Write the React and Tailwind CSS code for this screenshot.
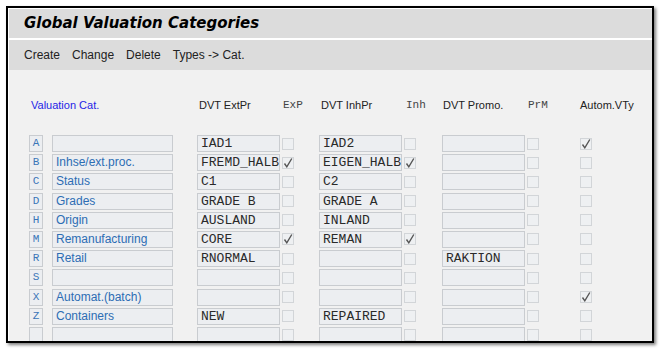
import React from "react"

const rows = [
  { key: "A", desc: "", ext: "IAD1", exp: false, inh: "IAD2", inhc: false, promo: "", prm: false, auto: true },
  { key: "B", desc: "Inhse/ext.proc.", ext: "FREMD_HALB", exp: true, inh: "EIGEN_HALB", inhc: true, promo: "", prm: false, auto: false },
  { key: "C", desc: "Status", ext: "C1", exp: false, inh: "C2", inhc: false, promo: "", prm: false, auto: false },
  { key: "D", desc: "Grades", ext: "GRADE B", exp: false, inh: "GRADE A", inhc: false, promo: "", prm: false, auto: false },
  { key: "H", desc: "Origin", ext: "AUSLAND", exp: false, inh: "INLAND", inhc: false, promo: "", prm: false, auto: false },
  { key: "M", desc: "Remanufacturing", ext: "CORE", exp: true, inh: "REMAN", inhc: true, promo: "", prm: false, auto: false },
  { key: "R", desc: "Retail", ext: "RNORMAL", exp: false, inh: "", inhc: false, promo: "RAKTION", prm: false, auto: false },
  { key: "S", desc: "", ext: "", exp: false, inh: "", inhc: false, promo: "", prm: false, auto: false },
  { key: "X", desc: "Automat.(batch)", ext: "", exp: false, inh: "", inhc: false, promo: "", prm: false, auto: true },
  { key: "Z", desc: "Containers", ext: "NEW", exp: false, inh: "REPAIRED", inhc: false, promo: "", prm: false, auto: false },
  { key: "", desc: "", ext: "", exp: false, inh: "", inhc: false, promo: "", prm: false, auto: false },
]

const sans = "font-['Liberation_Sans',Arial,sans-serif]"
const mono = "font-['Liberation_Mono','Courier_New',monospace]"

const Check = ({ checked, className }) => (
  <div className={`w-[12px] h-[12px] shrink-0 border border-[#d2d5d8] bg-[#eef0f2] ${className}`}>
    {checked && (
      <svg width="10" height="10" viewBox="0 0 10 10" className="block">
        <polyline points="1.5,5.5 3.8,8.8 8.8,0.5" fill="none" stroke="#555" strokeWidth="1.4" />
      </svg>
    )}
  </div>
)

const Field = ({ value, className }) => (
  <div className={`h-[17px] w-[83px] shrink-0 border border-[#c9ccd0] bg-[#eceef1] pl-[3px] ${mono} text-[13px] leading-[15px] text-[#2a2a2a] whitespace-pre overflow-hidden ${className}`}>
    {value}
  </div>
)

export default function App() {
  return (
    <div className="w-[660px] h-[351px] bg-white pt-[6px] pl-[6px]">
      <div className="w-[648px] h-[337px] border-2 border-black shadow-[2px_2px_3px_rgba(0,0,0,0.5)] overflow-hidden bg-white">
        <div className="h-full border-t border-l border-white flex flex-col">
          <div className="h-[29px] bg-[#dcdcdc] flex items-center pl-[15px] shrink-0">
            <span className="font-['DejaVu_Sans',sans-serif] font-bold italic text-[15px] text-black">Global Valuation Categories</span>
          </div>
          <div className="h-[2px] bg-white shrink-0" />
          <div className={`h-[30px] bg-[#dcdcdc] flex items-center gap-[12px] pl-[15px] ${sans} text-[12px] text-[#222] shrink-0`}>
            <span>Create</span>
            <span>Change</span>
            <span>Delete</span>
            <span>Types -&gt; Cat.</span>
          </div>
          <div className="flex-1 bg-[#f1f1f1] pt-[27px]">
            <div className={`flex items-center h-[16px] pl-[22px] ${sans} text-[11px] text-[#222]`}>
              <span className="w-[168px] text-[#2525e6]">Valuation Cat.</span>
              <span className="w-[84px]">DVT ExtPr</span>
              <span className={`w-[38px] ${mono} text-[11px] text-[#444]`}>ExP</span>
              <span className="w-[85px]">DVT InhPr</span>
              <span className={`w-[37px] ${mono} text-[11px] text-[#444]`}>Inh</span>
              <span className="w-[85px]">DVT Promo.</span>
              <span className={`w-[52px] ${mono} text-[11px] text-[#444]`}>PrM</span>
              <span>Autom.VTy</span>
            </div>
            <div className="mt-[22px] flex flex-col gap-[2.2px] pl-[20px]">
              {rows.map((r, i) => (
                <div key={i} className="flex items-center h-[17px]">
                  <div className={`w-[14px] h-[17px] shrink-0 border border-[#c9ccd0] bg-[#eceef1] text-center ${mono} text-[11px] leading-[15px] text-[#3a75b8]`}>
                    {r.key}
                  </div>
                  <div className={`ml-[9px] w-[121px] h-[17px] shrink-0 border border-[#c9ccd0] bg-[#eceef1] pl-[3px] ${sans} text-[12px] leading-[15px] text-[#2d6db4]`}>
                    {r.desc}
                  </div>
                  <Field value={r.ext} className="ml-[24px]" />
                  <Check checked={r.exp} className="ml-[2px]" />
                  <Field value={r.inh} className="ml-[25px]" />
                  <Check checked={r.inhc} className="ml-[2px]" />
                  <Field value={r.promo} className="ml-[26px]" />
                  <Check checked={r.prm} className="ml-[2px]" />
                  <Check checked={r.auto} className="ml-[41px]" />
                </div>
              ))}
            </div>
          </div>
        </div>
      </div>
    </div>
  )
}
